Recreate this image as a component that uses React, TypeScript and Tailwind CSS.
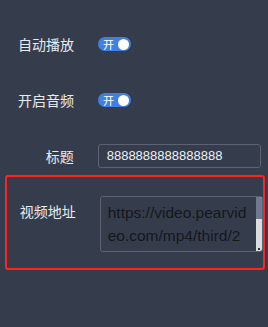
export default function App() {
  const font = "font-['Noto_Sans','Noto_Sans_CJK_SC',sans-serif]";
  return (
    <div className={`h-[327px] w-[268px] bg-[#353d4d] pt-[30px] ${font}`}>
      {/* 自动播放 */}
      <div className="flex h-[28px] items-center px-[7px]">
        <div className="w-[67px] text-right text-[14px] text-[#e8ebf0]">自动播放</div>
        <div className="ml-[24px] flex h-[14px] w-[33px] items-center justify-between rounded-full bg-[#3f7fe6] pl-[5px] pr-[2px]">
          <span className="text-[11px] leading-none text-white">开</span>
          <span className="h-[11px] w-[11px] rounded-full bg-white" />
        </div>
      </div>

      {/* 开启音频 */}
      <div className="mt-[28px] flex h-[28px] items-center px-[7px]">
        <div className="w-[67px] text-right text-[14px] text-[#e8ebf0]">开启音频</div>
        <div className="ml-[24px] flex h-[14px] w-[33px] items-center justify-between rounded-full bg-[#3f7fe6] pl-[5px] pr-[2px]">
          <span className="text-[11px] leading-none text-white">开</span>
          <span className="h-[11px] w-[11px] rounded-full bg-white" />
        </div>
      </div>

      {/* 标题 */}
      <div className="mt-[28px] flex h-[28px] items-center px-[7px]">
        <div className="w-[67px] text-right text-[14px] text-[#e8ebf0]">标题</div>
        <div className="ml-[24px] flex h-[24px] w-[164px] items-center rounded-[3px] border border-[#5c6272] pl-[8px] font-['Liberation_Sans',sans-serif] text-[13px] text-[#eef0f4]">
          8888888888888888
        </div>
      </div>

      {/* 视频地址 */}
      <div className="mx-[5px] mt-[5px] flex w-[260px] items-start rounded-[3px] border-2 border-[#ff2222] pb-[16px] pl-[2px] pt-[19px]">
        <div className="mt-[5px] w-[67px] text-right text-[14px] leading-[22px] text-[#e8ebf0]">视频地址</div>
        <div className="relative ml-[24px] h-[56px] w-[164px] overflow-hidden rounded-[3px] border border-[#5c6272]">
          <div className="h-full whitespace-nowrap pl-[7px] pt-[4px] font-['Liberation_Sans',sans-serif] text-[15.5px] leading-[23px] text-[#15171b]">
            <div>https://video.pearvid</div>
            <div>eo.com/mp4/third/2</div>
            <div>0210318/cont-1724000</div>
          </div>
          <div className="absolute right-0 top-0 flex h-full w-[6px] flex-col bg-[#dcdcdc]">
            <div className="h-[22px] w-full bg-[#6e7990]" />
            <div className="flex-1" />
            <div className="mb-[1px] ml-[2px] h-[2px] w-[2px] bg-[#333]" />
          </div>
        </div>
      </div>
    </div>
  );
}
